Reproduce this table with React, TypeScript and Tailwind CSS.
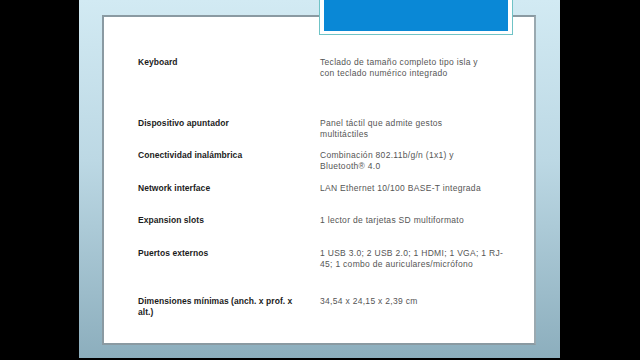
import React from "react";

const rows: { label: string[]; value: string[]; h: number }[] = [
  { label: ["Keyboard"], value: ["Teclado de tamaño completo tipo isla y", "con teclado numérico integrado"], h: 61 },
  { label: ["Dispositivo apuntador"], value: ["Panel táctil que admite gestos", "multitáctiles"], h: 32 },
  { label: ["Conectividad inalámbrica"], value: ["Combinación 802.11b/g/n (1x1) y", "Bluetooth® 4.0"], h: 33 },
  { label: ["Network interface"], value: ["LAN Ethernet 10/100 BASE-T integrada"], h: 32 },
  { label: ["Expansion slots"], value: ["1 lector de tarjetas SD multiformato"], h: 33 },
  { label: ["Puertos externos"], value: ["1 USB 3.0; 2 USB 2.0; 1 HDMI; 1 VGA; 1 RJ-", "45; 1 combo de auriculares/micrófono"], h: 48 },
  { label: ["Dimensiones mínimas (anch. x prof. x", "alt.)"], value: ["34,54 x 24,15 x 2,39 cm"], h: 30 },
];

export default function App() {
  return (
    <div className="w-[640px] h-[360px] bg-black flex overflow-hidden" style={{ fontFamily: '"Liberation Sans", Arial, sans-serif' }}>
      <div className="ml-[79px] w-[481px] h-[358px] relative bg-[linear-gradient(180deg,#d2eaf3_0%,#bcd8e4_45%,#8caebd_100%)]">
        <div className="ml-[23px] mt-[15px] w-[434px] h-[330px] bg-white border-2 border-[#8a9aa2] border-r-[#9aa9b0] pt-[40px] pl-[34px]">
          <div className="flex flex-col">
            {rows.map((r, i) => (
              <div key={i} className="flex" style={{ height: r.h }}>
                <div className="w-[182px] text-[8.5px] leading-[11px] font-bold text-[#1c1c1c] tracking-[0.05px]">
                  {r.label.map((l, j) => (
                    <div key={j}>{l}</div>
                  ))}
                </div>
                <div className="text-[8.5px] leading-[11px] text-[#555555] tracking-[0.3px]">
                  {r.value.map((l, j) => (
                    <div key={j}>{l}</div>
                  ))}
                </div>
              </div>
            ))}
          </div>
        </div>
        <div className="absolute left-[240px] top-0 w-[194px] h-[35px] border border-t-0 border-[#6fc3c6] bg-white px-[4px] pb-[3px]">
          <div className="w-full h-full bg-[#0a88d6]"></div>
        </div>
      </div>
    </div>
  );
}
